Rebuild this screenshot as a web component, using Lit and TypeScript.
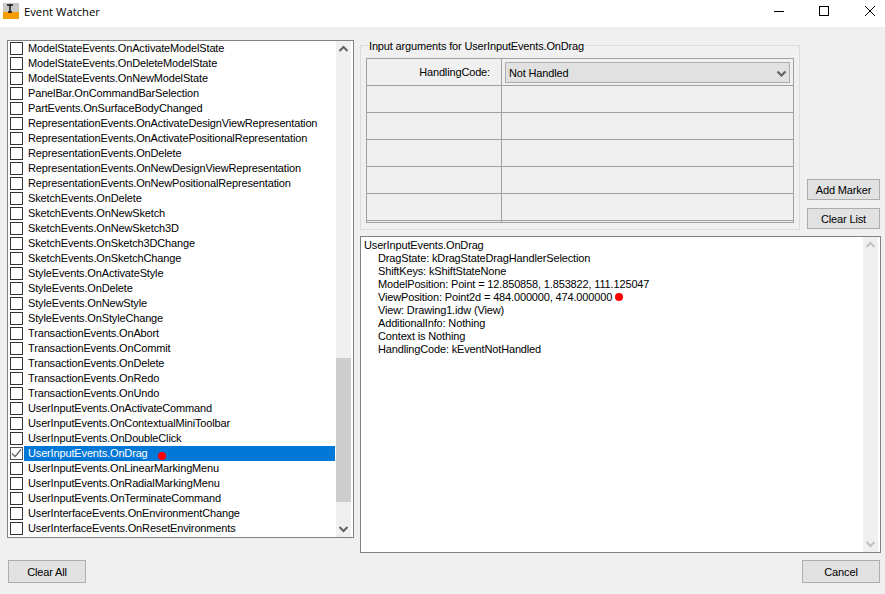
import { LitElement, html, css, svg } from 'lit';
import { customElement } from 'lit/decorators.js';
import { classMap } from 'lit/directives/class-map.js';

const EVENTS = [
  'ModelStateEvents.OnActivateModelState',
  'ModelStateEvents.OnDeleteModelState',
  'ModelStateEvents.OnNewModelState',
  'PanelBar.OnCommandBarSelection',
  'PartEvents.OnSurfaceBodyChanged',
  'RepresentationEvents.OnActivateDesignViewRepresentation',
  'RepresentationEvents.OnActivatePositionalRepresentation',
  'RepresentationEvents.OnDelete',
  'RepresentationEvents.OnNewDesignViewRepresentation',
  'RepresentationEvents.OnNewPositionalRepresentation',
  'SketchEvents.OnDelete',
  'SketchEvents.OnNewSketch',
  'SketchEvents.OnNewSketch3D',
  'SketchEvents.OnSketch3DChange',
  'SketchEvents.OnSketchChange',
  'StyleEvents.OnActivateStyle',
  'StyleEvents.OnDelete',
  'StyleEvents.OnNewStyle',
  'StyleEvents.OnStyleChange',
  'TransactionEvents.OnAbort',
  'TransactionEvents.OnCommit',
  'TransactionEvents.OnDelete',
  'TransactionEvents.OnRedo',
  'TransactionEvents.OnUndo',
  'UserInputEvents.OnActivateCommand',
  'UserInputEvents.OnContextualMiniToolbar',
  'UserInputEvents.OnDoubleClick',
  'UserInputEvents.OnDrag',
  'UserInputEvents.OnLinearMarkingMenu',
  'UserInputEvents.OnRadialMarkingMenu',
  'UserInputEvents.OnTerminateCommand',
  'UserInterfaceEvents.OnEnvironmentChange',
  'UserInterfaceEvents.OnResetEnvironments',
];

const LOG = [
  'DragState: kDragStateDragHandlerSelection',
  'ShiftKeys: kShiftStateNone',
  'ModelPosition: Point = 12.850858, 1.853822, 111.125047',
  'ViewPosition: Point2d = 484.000000, 474.000000',
  'View: Drawing1.idw (View)',
  'AdditionalInfo: Nothing',
  'Context is Nothing',
  'HandlingCode: kEventNotHandled',
];

const chevron = (d: string, color: string) => html`
  <svg width="15" height="16" viewBox="0 0 15 16">
    ${svg`<path d=${d} fill="none" stroke=${color} stroke-width="2"></path>`}
  </svg>
`;

const UP = 'M3.5 10l4-4 4 4';
const DOWN = 'M3.5 6l4 4 4-4';

@customElement('app-root')
export class AppRoot extends LitElement {
  static styles = css`
    :host {
      display: block;
      width: 885px;
      height: 594px;
      background: #f0f0f0;
      font-family: 'Liberation Sans', sans-serif;
      font-size: 11px;
      letter-spacing: -0.15px;
      color: #000;
      overflow: hidden;
    }

    .titlebar {
      height: 22px;
      padding: 0 0 5px 3px;
      background: #fff;
      display: flex;
      align-items: center;
    }

    .app-icon {
      width: 16px;
      height: 16px;
      margin-right: 5px;
    }

    .title {
      flex: 1;
      font-family: 'Open Sans', sans-serif;
      font-size: 11.25px;
      letter-spacing: 0;
    }

    .win-buttons {
      display: flex;
      height: 22px;
    }

    .win-buttons svg {
      width: 46px;
      height: 22px;
    }

    .content {
      height: 526px;
      display: flex;
      padding-left: 7px;
      gap: 6px;
    }

    .list-box {
      width: 345px;
      height: 496px;
      margin-top: 13px;
      border: 1px solid #828282;
      background: #fff;
      display: flex;
    }

    .rows {
      width: 327px;
    }

    .row {
      height: 15px;
      display: flex;
      align-items: center;
      padding-left: 2px;
      white-space: nowrap;
    }

    .check {
      width: 13px;
      height: 13px;
      box-sizing: border-box;
      border: 1px solid #333;
      background: #fff;
      margin-right: 1px;
      flex: none;
    }

    .check svg {
      display: block;
    }

    .label {
      flex: 1;
      height: 15px;
      line-height: 15px;
      padding-left: 4px;
      position: relative;
    }

    .row.selected .check {
      border-color: #555;
    }

    .row.selected .label {
      background: #0078d7;
      color: #fff;
    }

    .scrollbar {
      width: 15px;
      margin: 0 2px 0 1px;
      background: #f0f0f0;
      display: flex;
      flex-direction: column;
      align-items: center;
    }

    .scrollbar svg {
      flex: none;
    }

    .track {
      flex: 1;
      width: 100%;
      min-height: 0;
    }

    .thumb {
      background: #cdcdcd;
      height: 144px;
      margin-top: 301px;
    }

    .right {
      width: 521px;
      display: flex;
      flex-direction: column;
    }

    .top {
      height: 203px;
      display: flex;
      padding-top: 18px;
      gap: 7px;
      box-sizing: border-box;
    }

    .group {
      width: 440px;
      height: 185px;
      box-sizing: border-box;
      border: 1px solid #dcdcdc;
      padding-left: 5px;
    }

    .legend {
      width: fit-content;
      height: 12px;
      line-height: 12px;
      margin: -6px 0 0 2px;
      padding: 0 1px;
      background: #f0f0f0;
    }

    .grid {
      width: 428px;
      height: 165px;
      margin-top: 6px;
      box-sizing: border-box;
      padding: 1px;
      background: #a0a0a0;
      display: grid;
      grid-template-columns: 134px 1fr;
      grid-template-rows: repeat(6, 26px) 1px;
      gap: 1px;
    }

    .cell {
      background: #f0f0f0;
    }

    .cell.name {
      display: flex;
      align-items: center;
      justify-content: flex-end;
      padding-right: 11px;
    }

    .cell.value {
      padding: 3px;
    }

    .combo {
      height: 21px;
      box-sizing: border-box;
      background: #e1e1e1;
      border: 1px solid #adadad;
      display: flex;
      align-items: center;
      justify-content: space-between;
      padding-left: 3px;
    }

    .actions {
      width: 73px;
      display: flex;
      flex-direction: column;
      gap: 8px;
      padding-top: 134px;
    }

    button {
      font: inherit;
      letter-spacing: inherit;
      color: inherit;
      background: #e1e1e1;
      border: 1px solid #adadad;
      padding: 0;
      box-sizing: border-box;
    }

    .actions button {
      height: 21px;
    }

    .log {
      height: 317px;
      margin-top: 6px;
      width: 521px;
      box-sizing: border-box;
      border: 1px solid #828282;
      background: #fff;
      display: flex;
    }

    .log-text {
      flex: 1;
      padding: 2px 3px;
      line-height: 13px;
    }

    .log-line {
      height: 13px;
      white-space: nowrap;
    }

    .log-line.indent {
      padding-left: 14px;
    }

    .log-line .mark {
      display: inline-block;
      width: 8px;
      height: 8px;
      border-radius: 50%;
      background: #f00;
      margin-left: 3px;
    }

    .footer {
      display: flex;
      justify-content: space-between;
      padding: 7px 5px 0 8px;
    }

    .footer button {
      width: 78px;
      height: 23px;
    }

    .drag-dot {
      position: absolute;
      left: 134px;
      top: 6px;
      width: 8px;
      height: 8px;
      border-radius: 50%;
      background: #f00;
    }
  `;

  private renderRow(name: string) {
    const selected = name === 'UserInputEvents.OnDrag';
    return html`
      <div class=${classMap({ row: true, selected })}>
        <span class="check">
          ${selected
            ? html`<svg width="11" height="11" viewBox="0 0 11 11">
                <path d="M1 5.5l3 3 6-7" fill="none" stroke="#666" stroke-width="1.2"></path>
              </svg>`
            : ''}
        </span>
        <span class="label">${name}${selected ? html`<span class="drag-dot"></span>` : ''}</span>
      </div>
    `;
  }

  render() {
    return html`
      <div class="titlebar">
        <svg class="app-icon" viewBox="0 0 16 16">
          <rect width="16" height="9" fill="#c8c8c8"></rect>
          <rect y="9" width="16" height="7" fill="#f59c00"></rect>
          <path d="M4 2h6M7 2v7M5 9h4" stroke="#111" stroke-width="1.4" fill="none"></path>
        </svg>
        <span class="title">Event Watcher</span>
        <div class="win-buttons">
          <svg viewBox="0 0 46 22"><path d="M27 11.5h10" stroke="#000"></path></svg>
          <svg viewBox="0 0 46 22"><rect x="26.5" y="6.5" width="9" height="9" fill="none" stroke="#000"></rect></svg>
          <svg viewBox="0 0 46 22"><path d="M26 6l10 10M36 6l-10 10" stroke="#000" fill="none"></path></svg>
        </div>
      </div>
      <div class="content">
        <div class="list-box">
          <div class="rows">${EVENTS.map((e) => this.renderRow(e))}</div>
          <div class="scrollbar">
            ${chevron(UP, '#606060')}
            <div class="track"><div class="thumb"></div></div>
            ${chevron(DOWN, '#606060')}
          </div>
        </div>
        <div class="right">
          <div class="top">
            <div class="group">
              <div class="legend">Input arguments for UserInputEvents.OnDrag</div>
              <div class="grid">
                <div class="cell name">HandlingCode:</div>
                <div class="cell value">
                  <div class="combo">
                    <span>Not Handled</span>
                    ${chevron('M3.5 6.5l4 4 4-4', '#606060')}
                  </div>
                </div>
                ${[1, 2, 3, 4, 5, 6].map(
                  () => html`<div class="cell"></div><div class="cell"></div>`
                )}
              </div>
            </div>
            <div class="actions">
              <button>Add Marker</button>
              <button>Clear List</button>
            </div>
          </div>
          <div class="log">
            <div class="log-text">
              <div class="log-line">UserInputEvents.OnDrag</div>
              ${LOG.map(
                (l) => html`<div class="log-line indent">${l}${l.startsWith('ViewPosition')
                  ? html`<span class="mark"></span>`
                  : ''}</div>`
              )}
            </div>
            <div class="scrollbar">
              ${chevron(UP, '#c0c0c0')}
              <div class="track"></div>
              ${chevron(DOWN, '#c0c0c0')}
            </div>
          </div>
        </div>
      </div>
      <div class="footer">
        <button>Clear All</button>
        <button>Cancel</button>
      </div>
    `;
  }
}
